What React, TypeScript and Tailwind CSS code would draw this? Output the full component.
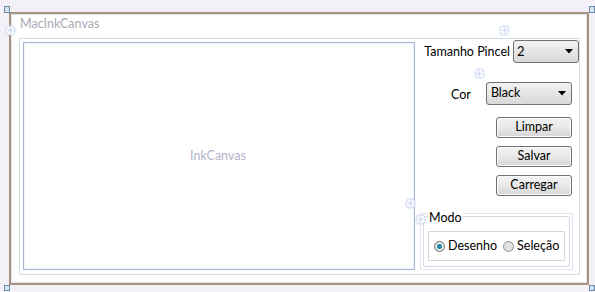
import React from "react";

const Adorner = ({ className }: { className: string }) => (
  <svg className={`absolute ${className}`} width="11" height="11" viewBox="0 0 11 11">
    <rect x="1" y="1" width="9" height="9" rx="3" fill="#f4f7fd" stroke="#b9c8e6" strokeWidth="1" strokeDasharray="2 1" />
    <path d="M5.5 3v5M3 5.5h5" stroke="#cdd8ee" strokeWidth="1" />
  </svg>
);

const Arrow = () => (
  <svg width="8" height="5" viewBox="0 0 8 5">
    <path d="M0 0h8L4 4.5z" fill="#000" />
  </svg>
);

const btn =
  "h-[21px] w-[76px] rounded-[3px] border border-[#707070] bg-gradient-to-b from-[#f3f3f3] via-[#e8e8e8] to-[#d6d6d6] text-[12.5px] text-black leading-none flex items-center justify-center shadow-[inset_0_0_0_1px_#fcfcfc]";

export default function App() {
  return (
    <div
      className="relative w-[595px] h-[292px] bg-[#f3f1f7] overflow-hidden"
      style={{ fontFamily: '"Segoe UI", Lato, "Noto Sans", sans-serif' }}
    >
      {/* corner handles */}
      <div className="absolute left-[4px] top-[6px] w-[6px] h-[7px] border border-[#6a8aa8] bg-[#d8e4f0]" />
      <div className="absolute left-[589px] top-[6px] w-[6px] h-[7px] border border-[#6a8aa8] bg-[#d8e4f0]" />
      <div className="absolute left-[4px] top-[285px] w-[6px] h-[6px] border border-[#6a8aa8] bg-[#d8e4f0]" />
      <div className="absolute left-[589px] top-[285px] w-[6px] h-[6px] border border-[#6a8aa8] bg-[#d8e4f0]" />

      <div className="pt-[12px] pl-[9px]">
        <div className="w-[580px] h-[273px] border-2 border-[#a8937f] bg-white flex flex-col">
          <div className="border border-[#dfe4ee] flex-1 flex flex-col">
            <div className="h-[23px] pl-[8px] pt-[1px] text-[12.5px] text-[#a9a9b4] leading-[16px]">MacInkCanvas</div>
            <div className="ml-[7px] mr-[6px] mb-[7px] flex-1 border border-[#cfe0e6] flex">
              <div className="ml-[3px] mt-[3px] mb-[4px] w-[392px] border border-[#a9b5d6] shadow-[inset_0_0_0_1px_#eef1f8] flex items-center justify-center">
                <span className="text-[12.5px] text-[#b4b4c6] pt-[1px] pr-[2px]">InkCanvas</span>
              </div>
              <div className="flex-1 flex flex-col pl-[5px] pr-[0px]">
                <div className="mt-[1px] h-[23px] flex items-center justify-end gap-[3px]">
                  <span className="text-[12.5px] text-black pt-[2px]">Tamanho Pincel</span>
                  <div className="w-[66px] h-[23px] rounded-[3px] border border-[#707070] bg-gradient-to-b from-[#f2f2f2] to-[#d9d9d9] flex items-center justify-between pl-[3px] pr-[5px]">
                    <span className="text-[13px] text-black leading-none">2</span>
                    <Arrow />
                  </div>
                </div>
                <div className="mt-[19px] h-[23px] flex items-center">
                  <span className="ml-[31px] text-[12.5px] text-black pt-[4px]">Cor</span>
                  <div className="ml-[15px] w-[86px] h-[23px] rounded-[3px] border border-[#707070] bg-gradient-to-b from-[#f2f2f2] to-[#d9d9d9] flex items-center justify-between pl-[4px] pr-[5px]">
                    <span className="text-[12.5px] text-black leading-none">Black</span>
                    <Arrow />
                  </div>
                </div>
                <div className="mt-[12px] ml-[76px] flex flex-col gap-[8px]">
                  <div className={btn}>Limpar</div>
                  <div className={btn}>Salvar</div>
                  <div className={btn}>Carregar</div>
                </div>
                <div className="mt-[17px] w-[153px] h-[57px] border border-[#dde3ef] p-[2px]">
                  <div className="relative h-full border border-[#d5d9e3] rounded-[2px] pt-[14px] px-[4px] pb-[4px]">
                    <span className="absolute left-[4px] top-[-6px] bg-white px-[1px] text-[12.5px] text-black leading-[14px]">Modo</span>
                    <div className="h-[30px] border border-[#d3d8e2] flex items-center gap-[6px] pl-[5px]">
                      <div className="flex items-center gap-[3px]">
                        <span className="w-[11px] h-[11px] rounded-full border border-[#707070] bg-[#e6e6e6] flex items-center justify-center">
                          <span className="w-[5px] h-[5px] rounded-full bg-[#1e8aa8]" />
                        </span>
                        <span className="text-[12.5px] text-black">Desenho</span>
                      </div>
                      <div className="flex items-center gap-[3px]">
                        <span className="w-[11px] h-[11px] rounded-full border border-[#909090] bg-[#e2e2e2]" />
                        <span className="text-[12.5px] text-black">Seleção</span>
                      </div>
                    </div>
                  </div>
                </div>
              </div>
            </div>
          </div>
        </div>
      </div>

      <Adorner className="left-[5px] top-[25px]" />
      <Adorner className="left-[499px] top-[25px]" />
      <Adorner className="left-[474px] top-[68px]" />
      <Adorner className="left-[405px] top-[198px]" />
      <Adorner className="left-[415px] top-[214px]" />
    </div>
  );
}
